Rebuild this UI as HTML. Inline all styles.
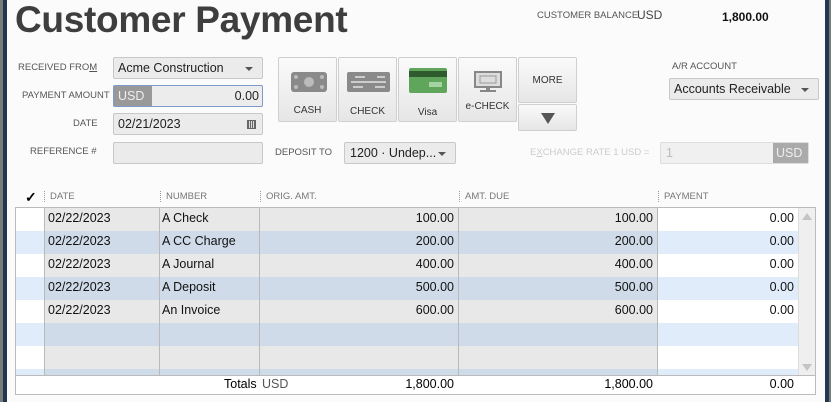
<!DOCTYPE html>
<html><head><style>
*{box-sizing:border-box;margin:0;padding:0}
body{width:831px;height:402px;overflow:hidden;background:#fbfbfb;font-family:"Liberation Sans",Arial,sans-serif;position:relative}
.a{position:absolute}
.lbl{font-size:9.5px;color:#555;position:absolute}
.fld{position:absolute;border:1px solid #c8c8c8;border-radius:2px;background:#ebebeb;font-size:12.5px;color:#222;padding-left:4px;line-height:20px}
.dd::after{content:"";position:absolute;right:9px;top:9px;border-left:4px solid transparent;border-right:4px solid transparent;border-top:4px solid #555}
.btn{position:absolute;top:57px;height:65px;width:59px;border:1px solid #cfcfcf;border-radius:2px;background:linear-gradient(#fafafa,#e6e6e6);font-size:10px;color:#333;text-align:center}
.row{position:absolute;left:16px;width:782px;height:23px;font-size:12.5px;color:#111}
.row div{position:absolute;top:0;height:23px;line-height:20px}
.hd{position:absolute;top:191px;font-size:9.5px;color:#777}
.hd::before{content:"";position:absolute;left:-6px;top:0;height:11px;border-left:1px dotted #999}
</style></head><body>
<div class="a" style="left:0;top:0;width:3px;height:402px;background:#7a7a7a"></div>
<div class="a" style="left:3px;top:0;width:4px;height:402px;background:#1f3852"></div>
<div class="a" style="left:825px;top:0;width:4px;height:402px;background:#1f3852"></div>
<div class="a" style="left:829px;top:0;width:2px;height:402px;background:#7a7a7a"></div>

<div class="a" style="left:15px;top:-1px;font-size:37px;font-weight:bold;color:#3e3e3e;letter-spacing:-0.3px">Customer Payment</div>
<div class="lbl" style="left:537px;top:10px">CUSTOMER BALANCE</div>
<div class="a" style="left:637px;top:8px;font-size:12px;color:#444">USD</div>
<div class="a" style="left:722px;top:10px;font-size:12px;font-weight:bold;color:#111">1,800.00</div>

<div class="lbl" style="left:18px;top:62px">RECEIVED FRO<u>M</u></div>
<div class="lbl" style="left:22px;top:90px">PAYMENT AMOUNT</div>
<div class="lbl" style="left:73px;top:118px">DATE</div>
<div class="lbl" style="left:30px;top:146px">REFERENCE #</div>

<div class="fld dd" style="left:113px;top:57px;width:150px;height:22px">Acme Construction</div>
<div class="fld" style="left:113px;top:85px;width:150px;height:22px;border-color:#7d9cc6;padding:0;background:#ececec"><span style="display:inline-block;background:#999;color:#eee;width:38px;height:20px;padding-left:4px">USD</span><span style="position:absolute;right:3px">0.00</span></div>
<div class="fld" style="left:113px;top:113px;width:150px;height:22px">02/21/2023<span style="position:absolute;right:6px;top:6px;width:9px;height:9px;border:1px solid #666;background:repeating-linear-gradient(90deg,#666 0 1px,#ddd 1px 2px)"></span></div>
<div class="fld" style="left:113px;top:142px;width:150px;height:22px"></div>

<div class="btn" style="left:278px"><svg class="a" style="left:12px;top:14px" width="36" height="20"><rect width="36" height="20" rx="3" fill="#8a8a8a"/><circle cx="18" cy="10" r="5" fill="#bbb"/><circle cx="5" cy="5" r="2" fill="#bbb"/><circle cx="31" cy="5" r="2" fill="#bbb"/><circle cx="5" cy="15" r="2" fill="#bbb"/><circle cx="31" cy="15" r="2" fill="#bbb"/></svg><div class="a" style="left:0;width:100%;top:47px">CASH</div></div>
<div class="btn" style="left:338px"><svg class="a" style="left:8px;top:14px" width="43" height="20"><rect width="43" height="20" rx="2" fill="#8a8a8a"/><rect x="8" y="4" width="10" height="2" fill="#ccc"/><rect x="30" y="4" width="8" height="2" fill="#ccc"/><rect x="4" y="9" width="35" height="2" fill="#ccc"/><rect x="6" y="14" width="10" height="2" fill="#ccc"/><rect x="28" y="14" width="10" height="2" fill="#ccc"/></svg><div class="a" style="left:0;width:100%;top:48px">CHECK</div></div>
<div class="btn" style="left:398px"><svg class="a" style="left:10px;top:10px" width="38" height="25"><rect width="38" height="25" rx="2" fill="#5fa55b"/><rect y="3" width="38" height="6" fill="#2f5a2e"/><rect x="20" y="14" width="13" height="5" fill="#a6d3a2"/></svg><div class="a" style="left:0;width:100%;top:49px">Visa</div></div>
<div class="btn" style="left:458px"><svg class="a" style="left:15px;top:13px" width="28" height="22"><rect x="1" y="1" width="26" height="15" fill="#ddd" stroke="#888" stroke-width="2"/><rect x="6" y="5" width="16" height="7" fill="none" stroke="#999"/><rect x="12" y="16" width="4" height="3" fill="#888"/><rect x="6" y="19" width="16" height="2" fill="#888"/></svg><div class="a" style="left:0;width:100%;top:43px">e-CHECK</div></div>
<div class="btn" style="left:518px;height:46px"><div class="a" style="left:0;width:100%;top:17px">MORE</div></div>
<div class="btn" style="left:518px;top:104px;height:27px"><div class="a" style="left:22px;top:8px;border-left:7px solid transparent;border-right:7px solid transparent;border-top:11px solid #555"></div></div>

<div class="lbl" style="left:275px;top:147px">DEPOSIT TO</div>
<div class="fld dd" style="left:344px;top:142px;width:112px;height:22px;padding-left:5px">1200 · Undep...</div>
<div class="lbl" style="left:672px;top:61px">A/R ACCOUNT</div>
<div class="fld dd" style="left:669px;top:78px;width:150px;height:22px">Accounts Receivable</div>
<div class="lbl" style="left:530px;top:147px;color:#ccc">E<u>X</u>CHANGE RATE 1 USD =</div>
<div class="fld" style="left:660px;top:142px;width:149px;height:22px;background:#f0f0f0;border-color:#ddd;color:#bbb;padding-left:5px">1<span style="position:absolute;right:0;top:0;background:#aaa;color:#eee;width:35px;padding-left:3px;height:20px">USD</span></div>

<div class="a" style="left:25px;top:189px;font-size:14px;font-weight:bold">✓</div>
<div class="hd" style="left:50px">DATE</div>
<div class="hd" style="left:166px">NUMBER</div>
<div class="hd" style="left:266px">ORIG. AMT.</div>
<div class="hd" style="left:465px">AMT. DUE</div>
<div class="hd" style="left:664px">PAYMENT</div>

<div class="a" style="left:15px;top:207px;width:801px;height:188px;border:1px solid #bbb;background:#fff"></div>
<div id="rows"></div>
<div class="a" style="left:798px;top:208px;width:17px;height:168px;background:#efefef;border-left:1px solid #ddd"></div>
<div class="a" style="left:802px;top:213px;border-left:5px solid transparent;border-right:5px solid transparent;border-bottom:7px solid #c4c4c4"></div>
<div class="a" style="left:802px;top:364px;border-left:5px solid transparent;border-right:5px solid transparent;border-top:7px solid #c4c4c4"></div>
<div class="a" style="left:16px;top:375px;width:799px;height:1px;background:#bbb"></div>
<div class="a" style="left:224px;top:377px;font-size:12.5px">Totals</div>
<div class="a" style="left:262px;top:377px;font-size:12.5px;color:#555">USD</div>
<div class="a" style="left:300px;top:377px;width:154px;text-align:right;font-size:12.5px">1,800.00</div>
<div class="a" style="left:500px;top:377px;width:153px;text-align:right;font-size:12.5px">1,800.00</div>
<div class="a" style="left:700px;top:377px;width:94px;text-align:right;font-size:12.5px">0.00</div>
<script>
var d=[["02/22/2023","A Check","100.00"],["02/22/2023","A CC Charge","200.00"],["02/22/2023","A Journal","400.00"],["02/22/2023","A Deposit","500.00"],["02/22/2023","An Invoice","600.00"],["","",""],["","",""],["","",""]];
var h="";
d.forEach(function(r,i){var y=208+i*23,even=i%2==1,mid=even?"#cfdbe8":"#e8e8e8",side=even?"#e1ecfa":"#fff";var hh=i==7?(375-y):23;
h+='<div class="row" style="top:'+y+'px;height:'+hh+'px"><div style="left:0;width:28px;height:'+hh+'px;background:'+side+'"></div>'+
'<div style="left:28px;width:613px;height:'+hh+'px;background:'+mid+'"></div>'+
'<div style="left:641px;width:141px;height:'+hh+'px;background:'+side+'"></div>'+
'<div style="left:32px">'+r[0]+'</div><div style="left:146px">'+r[1]+'</div>'+
'<div style="left:243px;width:195px;text-align:right">'+r[2]+'</div><div style="left:442px;width:195px;text-align:right">'+r[2]+'</div>'+
'<div style="left:641px;width:137px;text-align:right">'+(r[2]?"0.00":"")+'</div></div>';});
[44,159,259,458,657].forEach(function(x){h+='<div class="a" style="left:'+x+'px;top:208px;width:1px;height:167px;background:#b9b9b9"></div>';});
document.getElementById("rows").innerHTML=h;
</script>
</body></html>
